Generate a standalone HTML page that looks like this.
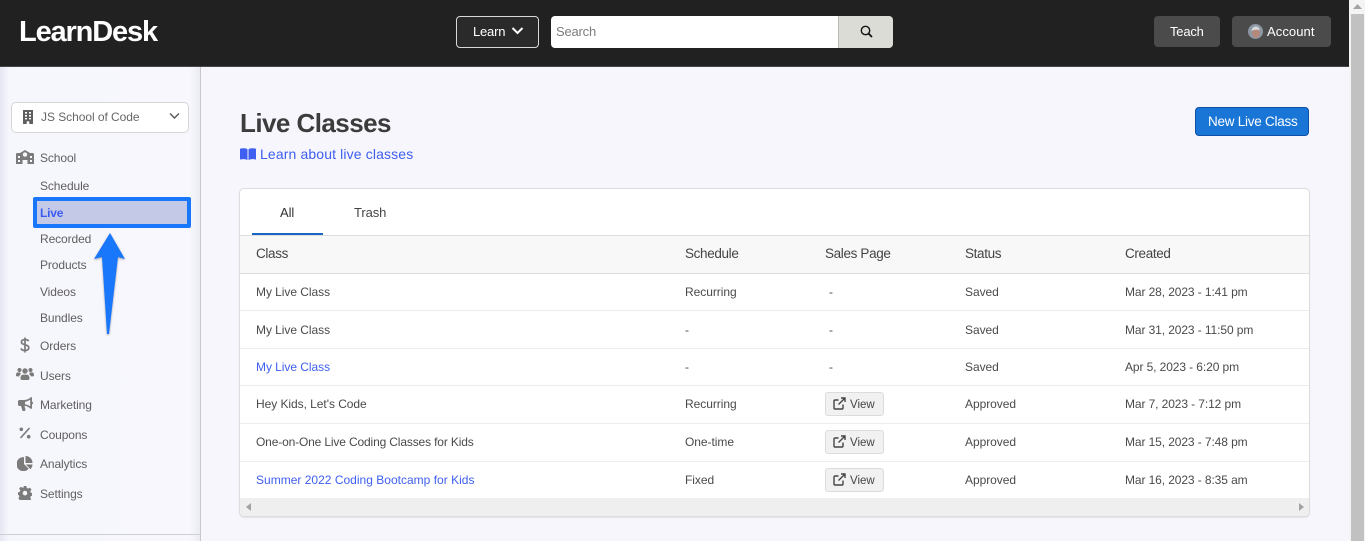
<!DOCTYPE html>
<html><head><meta charset="utf-8"><title>Live Classes</title>
<style>
html,body{margin:0;padding:0;width:1365px;height:541px;overflow:hidden;background:#f6f6fc;font-family:"Liberation Sans",Arial,sans-serif;}
*{box-sizing:border-box}
.a{position:absolute}
.t{position:absolute;white-space:nowrap;line-height:20px;font-size:12px;color:#555;letter-spacing:-.05px}
.s{color:#606060;font-size:12px;letter-spacing:-.1px}
.r{color:#4a4a4a;font-size:12px}
.d{letter-spacing:-.1px}
.l{color:#3f5ff0}
.h{color:#444;font-size:13.5px;letter-spacing:-.35px}
.line{position:absolute;left:240px;width:1069px;height:1px;background:#ececec}
.vb{position:absolute;left:825px;width:59px;height:24px;background:#f1f1f1;border:1px solid #dcdcdc;border-radius:3px}
.vb svg{position:absolute;left:7px;top:4px}
.vb span{position:absolute;left:24px;top:2px;font-size:11.5px;line-height:20px;color:#444}
svg{display:block}
</style></head><body>

<!-- header -->
<div class="a" style="left:0;top:0;width:1349px;height:67px;background:#212121;border-bottom:1px solid #45454a"></div>
<div class="t" style="left:19px;top:16px;line-height:32px;font-size:29px;font-weight:bold;color:#fff;letter-spacing:-1.15px">LearnDesk</div>

<div class="a" style="left:456px;top:16px;width:83px;height:32px;background:#2a2a2a;border:1px solid #d8d8d8;border-radius:4px"></div>
<div class="t" style="left:473px;top:22px;font-size:13px;color:#fff;letter-spacing:-.2px">Learn</div>
<svg class="a" style="left:511px;top:26px" width="13" height="10" viewBox="0 0 13 10"><path d="M1.500 2l5 5 5-5" fill="none" stroke="#fff" stroke-width="2"/></svg>

<div class="a" style="left:551px;top:16px;width:288px;height:32px;background:#fff;border-radius:4px 0 0 4px"></div>
<div class="t" style="left:556px;top:22px;font-size:13px;color:#7c7c7c;letter-spacing:-.2px">Search</div>
<div class="a" style="left:838px;top:16px;width:55px;height:32px;background:#dcdcd7;border-left:1px solid #bcbcb8;border-radius:0 4px 4px 0"></div>
<svg class="a" style="left:860px;top:25px" width="13" height="13" viewBox="0 0 13 13"><circle cx="5.500" cy="5.500" r="4.200" fill="none" stroke="#111" stroke-width="1.400"/><path d="M8.600 8.600l3.400 3.400" stroke="#111" stroke-width="1.800"/></svg>

<div class="a" style="left:1154px;top:16px;width:66px;height:31px;background:#4b4b4b;border-radius:4px"></div>
<div class="t" style="left:1170px;top:22px;font-size:13px;color:#fff;letter-spacing:-.2px">Teach</div>
<div class="a" style="left:1232px;top:16px;width:99px;height:31px;background:#4b4b4b;border-radius:4px"></div>
<svg class="a" style="left:1248px;top:24px" width="15" height="15" viewBox="0 0 15 15"><circle cx="7.500" cy="7.500" r="7.500" fill="#8d98a4"/><ellipse cx="8" cy="9" rx="3.800" ry="4.800" fill="#b5897c"/><path d="M3.500 7C4 3.500 6 2.500 8 2.500s3.500 1.500 3.800 4C10 5.500 6 5.500 3.500 7z" fill="#d8d8d8"/></svg>
<div class="t" style="left:1267px;top:22px;font-size:13px;color:#fff;letter-spacing:.08px">Account</div>

<!-- scrollbar -->
<div class="a" style="left:1349px;top:0;width:16px;height:541px;background:#f4f4f4"></div>
<div class="a" style="left:1351px;top:14px;width:13px;height:527px;background:#c1c1c1"></div>
<svg class="a" style="left:1353px;top:4px" width="9" height="6"><path d="M4.500 0L9 5H0z" fill="#a3a3a3"/></svg>

<!-- sidebar -->
<div class="a" style="left:0;top:67px;width:201px;height:474px;background:linear-gradient(90deg,#e6e6f2 0,#f6f6fd 9px,#f7f7fd 190px,#ececf4 199px);border-right:1px solid #c8c8d2"></div>
<div class="a" style="left:0;top:534px;width:200px;height:1px;background:#cfcfd6"></div>

<div class="a" style="left:11px;top:102px;width:178px;height:31px;background:#fff;border:1px solid #d6d6d6;border-radius:5px"></div>
<svg class="a" style="left:23px;top:110px" width="10" height="14" viewBox="0 0 10 14"><path fill="#5f5f5f" d="M0 0h10v14H6.300v-2.600H3.700V14H0z"/><path fill="#fff" d="M2 2h2v1.600H2zM6 2h2v1.600H6zM2 5h2v1.600H2zM6 5h2v1.600H6zM2 8h2v1.400H2zM6 8h2v1.400H6z"/></svg>
<div class="t" style="left:41px;top:107px;color:#666">JS School of Code</div>
<svg class="a" style="left:169px;top:112px" width="11" height="8" viewBox="0 0 11 8"><path d="M1 1.500l4.500 4.500L10 1.500" fill="none" stroke="#555" stroke-width="1.400"/></svg>

<svg class="a" style="left:16px;top:150px" width="18" height="14" viewBox="0 0 18 14"><path fill="#7b7b7b" d="M0 4.200C0 3.500.5 3 1.200 3H4l5-3 5 3h2.800c.7 0 1.200.5 1.200 1.200V14h-6.500v-4h-5v4H0z"/><circle cx="9" cy="4.600" r="2.200" fill="#f7f7fd"/><path fill="#f7f7fd" d="M2 6h2v2H2zM2 10h2v2H2zM14 6h2v2h-2zM14 10h2v2h-2z"/></svg>
<div class="t s" style="left:40px;top:148px">School</div>
<div class="t s" style="left:40px;top:176px">Schedule</div>

<div class="a" style="left:33px;top:197px;width:158px;height:31px;background:#c5c9e8;border:4px solid #1877fb;border-radius:2px"></div>
<div class="t" style="left:40px;top:203px;color:#3b5cf0;font-weight:bold;letter-spacing:-.2px">Live</div>
<div class="t s" style="left:40px;top:229px">Recorded</div>
<div class="t s" style="left:40px;top:255px">Products</div>
<div class="t s" style="left:40px;top:282px">Videos</div>
<div class="t s" style="left:40px;top:308px">Bundles</div>

<svg class="a" style="left:93px;top:232px;filter:drop-shadow(0 1px 1px rgba(0,0,0,.35))" width="33" height="104" viewBox="0 0 33 104"><path fill="#1877fb" d="M17 1L32 27l-7-2-9 77h-2L9 25l-8 2z"/></svg>

<svg class="a" style="left:20px;top:337px" width="10" height="16" viewBox="0 0 10 16"><path d="M8.600 4.200C8.200 3 7 2.600 5 2.600c-2 0-3.600.8-3.600 2.500C1.400 8.400 8.800 7 8.800 10.800c0 1.800-1.700 2.700-3.800 2.700-2.100 0-3.500-.7-4-2.200M5 .5v15" fill="none" stroke="#7b7b7b" stroke-width="1.700"/></svg>
<div class="t s" style="left:40px;top:336px">Orders</div>

<svg class="a" style="left:16px;top:367px" width="18" height="14" viewBox="0 0 18 14"><g fill="#7b7b7b"><circle cx="3.500" cy="3" r="2"/><circle cx="14.500" cy="3" r="2"/><circle cx="9" cy="4" r="2.700"/><path d="M0 8c0-2 1-2.600 2.200-2.600h1.800C4.300 6 4.600 6.600 5 7c-1 .6-1.500 1.400-1.700 2.400H1C.4 9.400 0 9 0 8.400zM18 8c0-2-1-2.600-2.200-2.600H14c-.3.600-.6 1.200-1 1.600 1 .6 1.500 1.400 1.700 2.400H17c.6 0 1-.4 1-1zM4.500 11.500C4.500 9 5.500 7.600 7 7.600h4c1.500 0 2.500 1.400 2.500 3.900 0 1-.6 1.500-1.400 1.500H5.900c-.8 0-1.400-.5-1.400-1.500z"/></g></svg>
<div class="t s" style="left:40px;top:366px">Users</div>

<svg class="a" style="left:18px;top:397px" width="15" height="14" viewBox="0 0 15 14"><path fill="#7b7b7b" d="M13 0c.6 0 1 .4 1 1v3.500c.6.300 1 .800 1 1.500s-.4 1.200-1 1.500V11c0 .6-.4 1-1 1-1.800-1.800-4-3-6.500-3.300V9l1 3.400-.6 1.600H4.600L3 9H1.500C.700 9 0 8.300 0 7.500v-3C0 3.700.700 3 1.500 3h4C8.500 3 11 2 13 0zm-.8 2.600C10.800 3.700 9 4.500 7 4.800v2.400c2 .3 3.800 1.100 5.200 2.200z"/></svg>
<div class="t s" style="left:40px;top:395px">Marketing</div>

<svg class="a" style="left:19px;top:427px" width="12" height="12" viewBox="0 0 12 12"><path d="M10.500 1L1.500 11" stroke="#7b7b7b" stroke-width="1.600"/><circle cx="2.300" cy="2.300" r="1.800" fill="#7b7b7b"/><circle cx="9.700" cy="9.700" r="1.800" fill="#7b7b7b"/></svg>
<div class="t s" style="left:40px;top:425px">Coupons</div>

<svg class="a" style="left:17px;top:456px" width="16" height="15" viewBox="0 0 16 15"><path fill="#7b7b7b" d="M7 1.200V8l4.700 4.700A7 7 0 1 1 7 1.200z"/><path fill="#7b7b7b" d="M8.500 0A7 7 0 0 1 15.500 7h-7zM8.800 8.500h6.700a7 7 0 0 1-2 4.700z"/></svg>
<div class="t s" style="left:40px;top:454px">Analytics</div>

<svg class="a" style="left:18px;top:486px" width="14" height="14" viewBox="0 0 14 14"><path fill="#7b7b7b" fill-rule="evenodd" d="M5.600 0h2.800l.4 2 1.300.6 1.800-1 1.600 2-1.200 1.700.4 1.300 1.900.6v2.400l-1.900.6-.5 1.300 1 1.700-1.800 1.700-1.700-1-1.300.5-.4 1.900H5.600l-.4-1.900-1.300-.5-1.700 1L.4 12.300l1-1.700-.5-1.300L0 8.700V6.300l1.900-.6.400-1.300L1.100 2.700l1.600-1.900 1.800 1 1.300-.6z M7 4.800a2.300 2.300 0 1 0 0 4.600 2.300 2.300 0 0 0 0-4.600z"/></svg>
<div class="t s" style="left:40px;top:484px">Settings</div>

<!-- main header -->
<div class="t" style="left:240px;top:106px;line-height:34px;font-size:26px;font-weight:bold;color:#3c3c3c;letter-spacing:-.55px">Live Classes</div>
<svg class="a" style="left:240px;top:148px" width="16" height="12" viewBox="0 0 16 12"><path fill="#3f5ff0" d="M0 .8C2.500 0 5.500 0 7.500 1.200V12C5.500 11 2.500 11 0 11.500zM16 .8C13.500 0 10.500 0 8.500 1.200V12c2-1 5-1 7.500-.5z"/></svg>
<div class="t l" style="left:260px;top:144px;font-size:14px;letter-spacing:.13px">Learn about live classes</div>

<div class="a" style="left:1195px;top:107px;width:114px;height:29px;background:#1976d6;border:1px solid #0e4fa8;border-radius:4px"></div>
<div class="t" style="left:1208px;top:112px;font-size:13.500px;color:#fff;letter-spacing:-.25px">New Live Class</div>

<!-- card -->
<div class="a" style="left:239px;top:188px;width:1071px;height:329px;background:#fff;border:1px solid #dcdcdc;border-radius:5px;box-shadow:0 1px 1px rgba(0,0,0,.08)"></div>
<div class="t" style="left:280px;top:203px;font-size:13px;color:#333;letter-spacing:-.1px">All</div>
<div class="t" style="left:354px;top:203px;font-size:13px;color:#444;letter-spacing:-.1px">Trash</div>
<div class="a" style="left:252px;top:233px;width:71px;height:2px;background:#1a66c4"></div>
<div class="a" style="left:240px;top:235px;width:1069px;height:39px;background:#f8f8f8;border-top:1px solid #dedede;border-bottom:1px solid #dedede"></div>

<div class="t h" style="left:256px;top:244px">Class</div>
<div class="t h" style="left:685px;top:244px">Schedule</div>
<div class="t h" style="left:825px;top:244px">Sales Page</div>
<div class="t h" style="left:965px;top:244px">Status</div>
<div class="t h" style="left:1125px;top:244px">Created</div>

<div class="line" style="top:310px"></div>
<div class="line" style="top:348px"></div>
<div class="line" style="top:385px"></div>
<div class="line" style="top:423px"></div>
<div class="line" style="top:461px"></div>

<!-- rows -->
<div class="t r" style="left:256px;top:282px">My Live Class</div>
<div class="t r" style="left:685px;top:282px">Recurring</div>
<div class="t r" style="left:829px;top:282px">-</div>
<div class="t r" style="left:965px;top:282px">Saved</div>
<div class="t r d" style="left:1125px;top:282px">Mar 28, 2023 - 1:41 pm</div>

<div class="t r" style="left:256px;top:320px">My Live Class</div>
<div class="t r" style="left:685px;top:320px">-</div>
<div class="t r" style="left:829px;top:320px">-</div>
<div class="t r" style="left:965px;top:320px">Saved</div>
<div class="t r d" style="left:1125px;top:320px">Mar 31, 2023 - 11:50 pm</div>

<div class="t r" style="left:256px;top:357px;color:#3f5ff0">My Live Class</div>
<div class="t r" style="left:685px;top:357px">-</div>
<div class="t r" style="left:829px;top:357px">-</div>
<div class="t r" style="left:965px;top:357px">Saved</div>
<div class="t r d" style="left:1125px;top:357px">Apr 5, 2023 - 6:20 pm</div>

<div class="t r" style="left:256px;top:394px">Hey Kids, Let's Code</div>
<div class="t r" style="left:685px;top:394px">Recurring</div>
<div class="vb" style="top:392px"><svg width="13" height="13" viewBox="0 0 13 13"><path d="M10 7.500V11a1 1 0 0 1-1 1H2a1 1 0 0 1-1-1V4a1 1 0 0 1 1-1h3.500M5.500 7.500L12 1M8 1h4v4" fill="none" stroke="#444" stroke-width="1.400"/></svg><span>View</span></div>
<div class="t r" style="left:965px;top:394px">Approved</div>
<div class="t r d" style="left:1125px;top:394px">Mar 7, 2023 - 7:12 pm</div>

<div class="t r" style="left:256px;top:432px;letter-spacing:-.15px">One-on-One Live Coding Classes for Kids</div>
<div class="t r" style="left:685px;top:432px">One-time</div>
<div class="vb" style="top:430px"><svg width="13" height="13" viewBox="0 0 13 13"><path d="M10 7.500V11a1 1 0 0 1-1 1H2a1 1 0 0 1-1-1V4a1 1 0 0 1 1-1h3.500M5.500 7.500L12 1M8 1h4v4" fill="none" stroke="#444" stroke-width="1.400"/></svg><span>View</span></div>
<div class="t r" style="left:965px;top:432px">Approved</div>
<div class="t r d" style="left:1125px;top:432px">Mar 15, 2023 - 7:48 pm</div>

<div class="t r" style="left:256px;top:470px;color:#3f5ff0;letter-spacing:.01px">Summer 2022 Coding Bootcamp for Kids</div>
<div class="t r" style="left:685px;top:470px">Fixed</div>
<div class="vb" style="top:468px"><svg width="13" height="13" viewBox="0 0 13 13"><path d="M10 7.500V11a1 1 0 0 1-1 1H2a1 1 0 0 1-1-1V4a1 1 0 0 1 1-1h3.500M5.500 7.500L12 1M8 1h4v4" fill="none" stroke="#444" stroke-width="1.400"/></svg><span>View</span></div>
<div class="t r" style="left:965px;top:470px">Approved</div>
<div class="t r d" style="left:1125px;top:470px">Mar 16, 2023 - 8:35 am</div>

<!-- horizontal scrollbar -->
<div class="a" style="left:240px;top:498px;width:1069px;height:18px;background:#efefef;border-radius:0 0 4px 4px"></div>
<svg class="a" style="left:246px;top:503px" width="5" height="8"><path d="M5 0v8L0 4z" fill="#a3a3a3"/></svg>
<svg class="a" style="left:1299px;top:503px" width="5" height="8"><path d="M0 0v8l5-4z" fill="#a3a3a3"/></svg>

</body></html>
